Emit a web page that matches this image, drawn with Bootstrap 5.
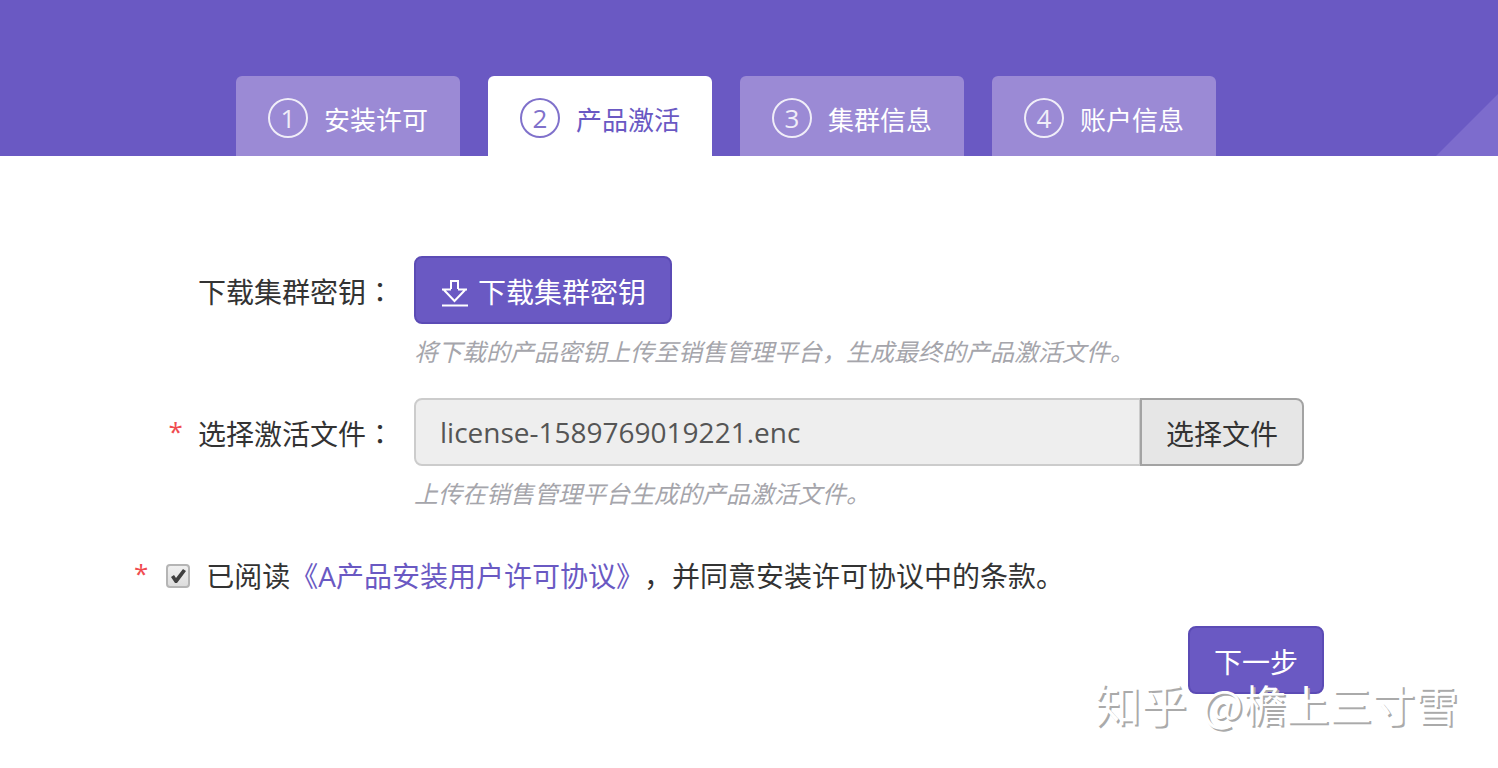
<!DOCTYPE html>
<html lang="zh-CN">
<head>
<meta charset="utf-8">
<meta name="viewport" content="width=device-width, initial-scale=1">
<title>产品激活</title>
<link href="https://cdn.jsdelivr.net/npm/bootstrap@5.3.0/dist/css/bootstrap.min.css" rel="stylesheet">
<style>
  :root { --brand: #6a59c3; --brand-edge: #5b4bb5; }
  body { font-family: "Open Sans", "Noto Sans CJK SC", sans-serif; font-size: 28px; line-height: 40px; color: #333; background: #fff; }
  .wizard-head { background: var(--brand); padding: 76px 48px 0 236px; }
  .head-corner { position: absolute; right: 0; bottom: 0; width: 62px; height: 62px; background: #7d6ccd; clip-path: polygon(100% 0, 100% 100%, 0 100%); }
  .steps { gap: 28px; }
  .steps .nav-link { width: 224px; height: 80px; padding: 4px 32px 0; gap: 16px; font-size: 26px; color: #fff; background: #9b8ad5; border: 0; border-radius: 6px 6px 0 0; white-space: nowrap; }
  .steps .nav-link.active { color: var(--brand); background: #fff; }
  .step-no { width: 40px; height: 40px; border: 2px solid currentColor; opacity: .85; }
  .step-name { padding-top: 4px; }
  .wizard-body { padding: 100px 174px 72px 134px; }
  .form-line { display: grid; grid-template-columns: 260px minmax(0, 1fr); column-gap: 20px; padding-right: 20px; }
  .form-line > label { padding: 15px 0 13px; text-align: right; white-space: nowrap; }
  .colon { font-family: "Noto Sans CJK TC", sans-serif; }
  .need { color: #f04b50; font-size: 26px; line-height: 32px; vertical-align: 4px; }
  .btn-brand, .btn-brand:hover { height: 68px; padding: 4px 24px 0; font-size: 28px; line-height: 40px; color: #fff; background: var(--brand); border: 2px solid var(--brand-edge); border-radius: 8px; }
  .hint { margin: 8px 0 26px; font-size: 24px; line-height: 40px; font-style: italic; color: #a5a5ab; }
  .file-box { height: 68px; padding: 0 24px; font-size: 28px; color: #555; border: 2px solid #ccc; border-radius: 8px; }
  .file-box:read-only { background: #eee; }
  .btn-file { width: 164px; padding: 4px 0 0; font-size: 28px; color: #333; background: #e6e6e6; border: 2px solid #a3a3a3; border-radius: 8px; }
  .agree { padding-top: 42px; white-space: nowrap; }
  .agree .need { margin-right: 18px; padding-bottom: 6px; }
  .agree-tick { appearance: none; width: 24px; height: 24px; margin: 0 16px 0 0; border: 2px solid #b5b5b5; border-radius: 4px; background: linear-gradient(#f0f0f0, #ddd); }
  .agree-tick:checked { background: url("data:image/svg+xml,%3Csvg xmlns='http://www.w3.org/2000/svg' viewBox='0 0 20 20'%3E%3Cpath d='M3 11l3-2 2 3 7-9 3 2-9 12H7z' fill='%23404040'/%3E%3C/svg%3E") center / 20px no-repeat, linear-gradient(#f0f0f0, #ddd); }
  .agree a { color: var(--brand); }
  .actions { padding-top: 30px; }
  .mark-user { position: absolute; right: -134px; bottom: -33px; font-family: "Noto Sans CJK SC", sans-serif; font-size: 43px; line-height: 48px; color: #fff; text-shadow: 2px 2px 0 #aaa; white-space: nowrap; pointer-events: none; }
  .mark-site { font-size: 46px; margin-right: 6px; }
</style>
</head>
<body>
<header class="wizard-head position-relative">
  <div class="head-corner"></div>
  <nav class="nav steps flex-nowrap" aria-label="安装步骤">
    <a class="nav-link d-flex align-items-center" href="#"><span class="step-no rounded-circle d-flex align-items-center justify-content-center">1</span><span class="step-name">安装许可</span></a>
    <a class="nav-link active d-flex align-items-center" href="#" aria-current="step"><span class="step-no rounded-circle d-flex align-items-center justify-content-center">2</span><span class="step-name">产品激活</span></a>
    <a class="nav-link d-flex align-items-center" href="#"><span class="step-no rounded-circle d-flex align-items-center justify-content-center">3</span><span class="step-name">集群信息</span></a>
    <a class="nav-link d-flex align-items-center" href="#"><span class="step-no rounded-circle d-flex align-items-center justify-content-center">4</span><span class="step-name">账户信息</span></a>
  </nav>
</header>
<main class="wizard-body">
  <form>
    <div class="form-line">
      <label for="keyButton">下载集群密钥<span class="colon" lang="zh-TW">：</span></label>
      <div>
        <button class="btn btn-brand d-inline-flex align-items-center gap-2" type="button" id="keyButton">
          <svg width="30" height="30" viewBox="0 0 30 30" fill="none" stroke="#fff" stroke-width="2" aria-hidden="true"><path d="M11 12V4h7v8M2 12.500h9M18 12.500h9M4 13l10.500 11L25 13M2 28.500h26"/></svg>
          下载集群密钥</button>
        <p class="hint">将下载的产品密钥上传至销售管理平台，生成最终的产品激活文件。</p>
      </div>
    </div>
    <div class="form-line">
      <label for="licenseFile"><span class="need me-2">*</span> 选择激活文件<span class="colon" lang="zh-TW">：</span></label>
      <div>
        <div class="input-group flex-nowrap">
          <input class="form-control file-box" id="licenseFile" type="text" value="license-1589769019221.enc" readonly>
          <button class="btn btn-file" type="button">选择文件</button>
        </div>
        <p class="hint mb-0">上传在销售管理平台生成的产品激活文件。</p>
      </div>
    </div>
    <div class="agree d-flex align-items-center">
      <span class="need">*</span>
      <input class="agree-tick" id="agree" type="checkbox" checked>
      <label for="agree">已阅读</label><a class="text-decoration-none" href="#">《A产品安装用户许可协议》</a><span>，并同意安装许可协议中的条款。</span>
    </div>
    <div class="actions d-flex justify-content-end position-relative">
      <button class="btn btn-brand" type="submit">下一步</button>
      <div class="mark-user"><span class="mark-site">知乎</span> @檐上三寸雪</div>
    </div>
  </form>
</main>
<script src="https://cdn.jsdelivr.net/npm/bootstrap@5.3.0/dist/js/bootstrap.bundle.min.js"></script>
</body>
</html>
